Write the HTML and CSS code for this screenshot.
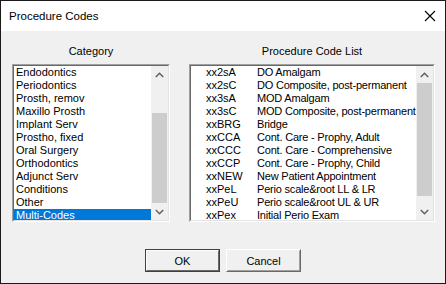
FILE: index.html
```html
<!DOCTYPE html>
<html>
<head>
<meta charset="utf-8">
<link rel="stylesheet" href="styles.css">
</head>
<body>
<div class="window">
  <div class="titlebar">
    <span class="title">Procedure Codes</span>
    <svg class="close" width="12" height="12" viewBox="0 0 12 12"><path d="M1 1 L11 11 M11 1 L1 11" stroke="#000" stroke-width="1.1" fill="none"/></svg>
  </div>
  <div class="client">
    <div class="panes">
      <div class="pane pane-left">
        <div class="label">Category</div>
        <div class="listbox">
          <div class="listbox-inner">
            <div class="items">
              <div class="item">Endodontics</div>
              <div class="item">Periodontics</div>
              <div class="item">Prosth, remov</div>
              <div class="item">Maxillo Prosth</div>
              <div class="item">Implant Serv</div>
              <div class="item">Prostho, fixed</div>
              <div class="item">Oral Surgery</div>
              <div class="item">Orthodontics</div>
              <div class="item">Adjunct Serv</div>
              <div class="item">Conditions</div>
              <div class="item">Other</div>
              <div class="item selected">Multi-Codes</div>
            </div>
            <div class="scrollbar">
              <div class="arrow"><svg width="9" height="6" viewBox="0 0 9 6"><path d="M0.8 5 L4.5 1.3 L8.2 5" stroke="#606060" stroke-width="1.5" fill="none"/></svg></div>
              <div class="track track-left"><div class="thumb"></div></div>
              <div class="arrow"><svg width="9" height="6" viewBox="0 0 9 6"><path d="M0.8 1 L4.5 4.7 L8.2 1" stroke="#606060" stroke-width="1.5" fill="none"/></svg></div>
            </div>
          </div>
        </div>
      </div>
      <div class="pane pane-right">
        <div class="label">Procedure Code List</div>
        <div class="listbox">
          <div class="listbox-inner">
            <div class="items">
              <div class="item row"><span class="code">xx2sA</span><span class="desc">DO Amalgam</span></div>
              <div class="item row"><span class="code">xx2sC</span><span class="desc">DO Composite, post-permanent</span></div>
              <div class="item row"><span class="code">xx3sA</span><span class="desc">MOD Amalgam</span></div>
              <div class="item row"><span class="code">xx3sC</span><span class="desc">MOD Composite, post-permanent</span></div>
              <div class="item row"><span class="code">xxBRG</span><span class="desc">Bridge</span></div>
              <div class="item row"><span class="code">xxCCA</span><span class="desc">Cont. Care - Prophy, Adult</span></div>
              <div class="item row"><span class="code">xxCCC</span><span class="desc">Cont. Care - Comprehensive</span></div>
              <div class="item row"><span class="code">xxCCP</span><span class="desc">Cont. Care - Prophy, Child</span></div>
              <div class="item row"><span class="code">xxNEW</span><span class="desc">New Patient Appointment</span></div>
              <div class="item row"><span class="code">xxPeL</span><span class="desc">Perio scale&amp;root LL &amp; LR</span></div>
              <div class="item row"><span class="code">xxPeU</span><span class="desc">Perio scale&amp;root UL &amp; UR</span></div>
              <div class="item row"><span class="code">xxPex</span><span class="desc">Initial Perio Exam</span></div>
            </div>
            <div class="scrollbar">
              <div class="arrow"><svg width="9" height="6" viewBox="0 0 9 6"><path d="M0.8 5 L4.5 1.3 L8.2 5" stroke="#606060" stroke-width="1.5" fill="none"/></svg></div>
              <div class="track track-right"><div class="thumb"></div></div>
              <div class="arrow"><svg width="9" height="6" viewBox="0 0 9 6"><path d="M0.8 1 L4.5 4.7 L8.2 1" stroke="#606060" stroke-width="1.5" fill="none"/></svg></div>
            </div>
          </div>
        </div>
      </div>
    </div>
    <div class="buttons">
      <div class="btn default"><div class="btn-face">OK</div></div>
      <div class="btn"><div class="btn-face">Cancel</div></div>
    </div>
  </div>
</div>
</body>
</html>
```
FILE: styles.css
```css
* { box-sizing: border-box; }
html, body { margin: 0; padding: 0; }
body {
  width: 446px;
  height: 284px;
  overflow: hidden;
  font-family: "Liberation Sans", Arial, sans-serif;
  font-size: 11px;
  color: #000;
}
.window {
  width: 446px;
  height: 284px;
  border: 1px solid #1a1a1a;
  background: #f0f0f0;
  display: flex;
  flex-direction: column;
}
.titlebar {
  height: 30px;
  background: #fff;
  display: flex;
  align-items: center;
  justify-content: space-between;
  padding-left: 8px;
  padding-right: 8px;
}
.title {
  font-size: 11.5px;
}
.close { display: block; margin-right: 1px; }
.client {
  flex: 1;
  display: flex;
  flex-direction: column;
}
.panes {
  display: flex;
  padding-left: 11px;
  gap: 19px;
  margin-top: 14px;
}
.pane {
  display: flex;
  flex-direction: column;
  gap: 6px;
}
.pane-left { width: 158px; }
.pane-right { width: 246px; }
.label {
  height: 13px;
  line-height: 13px;
  text-align: center;
}
.listbox {
  height: 158px;
  border: 1px solid;
  border-color: #a0a0a0 #ffffff #ffffff #a0a0a0;
}
.listbox-inner {
  height: 100%;
  border: 1px solid;
  border-color: #696969 #e3e3e3 #e3e3e3 #696969;
  background: #fff;
  display: flex;
}
.items {
  flex: 1;
  min-width: 0;
  overflow: hidden;
}
.item {
  height: 13px;
  line-height: 13px;
  padding-left: 2px;
  white-space: nowrap;
}
.item.selected {
  background: #0078d7;
  color: #fff;
}
.row { display: flex; padding-left: 15px; }
.code { width: 51px; flex: none; }
.desc { letter-spacing: -0.2px; }
.scrollbar {
  width: 17px;
  flex: none;
  background: #f0f0f0;
  display: flex;
  flex-direction: column;
}
.arrow {
  height: 17px;
  display: flex;
  align-items: center;
  justify-content: center;
}
.arrow svg { display: block; }
.track {
  flex: 1;
  padding: 0 1px;
  display: flex;
  flex-direction: column;
}
.thumb { background: #cdcdcd; flex: 1; }
.track-left { padding-top: 30px; }
.track-right { padding-bottom: 7px; }
.buttons {
  display: flex;
  gap: 6px;
  padding-left: 144px;
  margin-top: 27px;
}
.btn {
  width: 75px;
  height: 23px;
  border: 1px solid;
  border-color: #ffffff #696969 #696969 #ffffff;
  background: #f0f0f0;
}
.btn-face {
  height: 100%;
  border: 1px solid;
  border-color: #f0f0f0 #a0a0a0 #a0a0a0 #f0f0f0;
  display: flex;
  align-items: center;
  justify-content: center;
}
.btn.default {
  border: 1px solid #404040;
}
.btn.default .btn-face {
  border-color: #ffffff #696969 #696969 #ffffff;
}
```
